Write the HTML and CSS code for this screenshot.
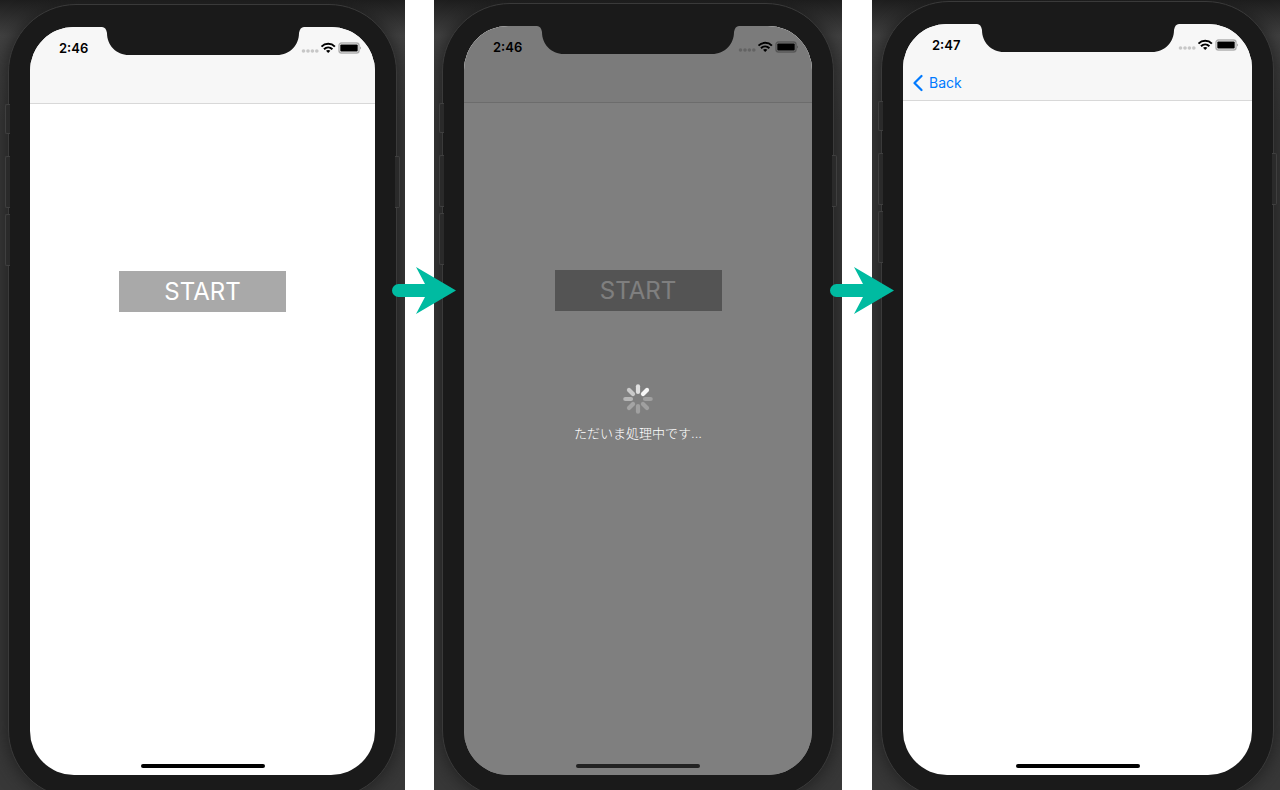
FILE: index.html
```html
<!DOCTYPE html>
<html lang="ja">
<head>
<meta charset="utf-8">
<meta name="viewport" content="width=device-width, initial-scale=1">
<title>START</title>
<link rel="stylesheet" href="styles.css">
</head>
<body>
<svg class="symbols" aria-hidden="true">
  <symbol id="notch" viewBox="0 0 202 28"><path d="M0 0Q4 0 5 6C5 18 14 28 27 28H175C188 28 197 18 197 6Q198 0 202 0Z"/></symbol>
  <symbol id="status" viewBox="0 0 60 12">
    <g fill="#8b8b8b" fill-opacity=".45"><circle cx="2.500" cy="9" r="1.800"/><circle cx="7" cy="9" r="1.800"/><circle cx="11.400" cy="9" r="1.800"/><circle cx="15.800" cy="9" r="1.800"/></g>
    <g fill="none" stroke="#000" stroke-width="2"><path d="M20.500 4.600C24.200.9 30.200.9 33.900 4.600"/><path d="M23 7.200C25.400 4.900 29 4.900 31.400 7.200"/></g>
    <path d="M25 8.700Q27.200 7.100 29.400 8.700L27.200 11Z"/>
    <rect x="38" y="1" width="20" height="10" rx="2.500" fill="#fff" fill-opacity=".15" stroke="#777" stroke-opacity=".55" stroke-width="1.400"/>
    <rect x="39.300" y="2.400" width="17.400" height="7.200" rx="1"/>
    <path d="M59 4.500Q60.800 6 59 7.500Z" fill="#777" fill-opacity=".7"/>
  </symbol>
  <symbol id="arrow" viewBox="0 0 64 48"><path fill="#00bba1" d="M24 1L64 24.500L24 48L33 31H6.500A6.500 6.500 0 0 1 6.500 18H33Z"/></symbol>
</svg>
<main class="scene">
  <section class="panel panel-first">
    <div class="phone">
      <i class="key key-mute"></i><i class="key key-up"></i><i class="key key-down"></i><i class="key key-power"></i>
      <div class="screen">
        <svg class="notch"><use href="#notch"/></svg>
        <header class="bar">
          <div class="status"><time>2:46</time><svg class="status-icons"><use href="#status"/></svg></div>
          <nav class="nav"></nav>
        </header>
        <div class="content"><button class="start" type="button">START</button></div>
        <div class="home"></div>
      </div>
    </div>
  </section>
  <div class="gap"><svg class="arrow"><use href="#arrow"/></svg></div>
  <section class="panel panel-second">
    <div class="phone">
      <i class="key key-mute"></i><i class="key key-up"></i><i class="key key-down"></i><i class="key key-power"></i>
      <div class="screen">
        <svg class="notch"><use href="#notch"/></svg>
        <header class="bar">
          <div class="status"><time>2:46</time><svg class="status-icons"><use href="#status"/></svg></div>
          <nav class="nav"></nav>
        </header>
        <div class="content"><button class="start" type="button">START</button></div>
        <div class="home home-dimmed"></div>
        <div class="overlay" role="status">
          <svg class="spinner" viewBox="-15 -15 30 30" fill="none" stroke-width="4.200" stroke-linecap="round">
            <path d="M0-7V-12.700" stroke="#e0e0e0"/>
            <path d="M5-5L9-9" stroke="#f8f8f8"/>
            <path d="M7 0H12.700" stroke="#a0a0a0"/>
            <path d="M5 5L9 9" stroke="#a0a0a0"/>
            <path d="M0 7V12.700" stroke="#a0a0a0"/>
            <path d="M-5 5L-9 9" stroke="#a4a4a4"/>
            <path d="M-7 0H-12.700" stroke="#b6b6b6"/>
            <path d="M-5-5L-9-9" stroke="#cacaca"/>
          </svg>
          <p class="message">ただいま処理中です...</p>
        </div>
      </div>
    </div>
  </section>
  <div class="gap"><svg class="arrow"><use href="#arrow"/></svg></div>
  <section class="panel panel-third">
    <div class="phone">
      <i class="key key-mute"></i><i class="key key-up"></i><i class="key key-down"></i><i class="key key-power"></i>
      <div class="screen">
        <svg class="notch"><use href="#notch"/></svg>
        <header class="bar">
          <div class="status"><time>2:47</time><svg class="status-icons"><use href="#status"/></svg></div>
          <nav class="nav"><a class="back" href="#"><svg class="chevron" viewBox="0 0 10 18" fill="none" stroke="currentColor" stroke-width="2.200" stroke-linecap="round" stroke-linejoin="round"><path d="M8.500 2L1.500 9L8.500 16"/></svg>Back</a></nav>
        </header>
        <div class="content"></div>
        <div class="home"></div>
      </div>
    </div>
  </section>
</main>
</body>
</html>
```

FILE: styles.css
```css
* { box-sizing: border-box; }

body {
  margin: 0;
  background: #fff;
  font-family: Inter, "Noto Sans CJK JP", sans-serif;
  color: #000;
}

.symbols { position: absolute; width: 0; height: 0; }

.scene {
  display: grid;
  grid-template-columns: 405fr 29px 408fr 30px 408fr;
  height: 100vh;
  overflow: hidden;
}

.panel {
  display: flex;
  overflow: hidden;
  background: linear-gradient(#1e1e1e, #424242 36px, #383838 120px, #383838);
}
.panel-first { padding: 4px 8px 0; }
.panel-second { padding: 3px 8px 0; }
.panel-third { padding: 1px 6px 0 9px; }

.phone {
  position: relative;
  flex: 1;
  display: flex;
  margin-bottom: -8px;
  padding: 22px 21px;
  border: 1px solid #3a3a3a;
  border-radius: 68px;
  background: #1a1a1a;
  box-shadow: 0 0 20px #1c1c1c;
}

.key {
  position: absolute;
  left: -4px;
  width: 5px;
  height: 52px;
  border: 1px solid #3f3f3f;
  border-right: 0;
  border-radius: 2px 0 0 2px;
  background: #2a2a2a;
}
.key-mute { top: 99px; height: 30px; }
.key-up { top: 151px; }
.key-down { top: 209px; }
.key-power {
  top: 151px;
  left: auto;
  right: -4px;
  border: 1px solid #3f3f3f;
  border-left: 0;
  border-radius: 0 2px 2px 0;
}

.screen {
  position: relative;
  flex: 1;
  display: flex;
  flex-direction: column;
  overflow: hidden;
  border-radius: 44px;
  background: #fff;
}

.notch {
  position: absolute;
  z-index: 3;
  top: 0;
  left: 50%;
  width: 202px;
  height: 28px;
  margin-left: -101px;
  fill: #1a1a1a;
}

.bar { background: #f7f7f7; border-bottom: 1px solid #d8d8d8; }

.status {
  display: flex;
  justify-content: space-between;
  align-items: center;
  height: 41px;
  padding: 0 14px 0 29px;
  font-size: 13px;
  font-weight: 600;
}
.status-icons { width: 60px; height: 12px; }

.nav { display: flex; align-items: center; height: 35px; padding: 0 10px; }
.back {
  display: flex;
  align-items: center;
  gap: 6px;
  color: #007aff;
  font-size: 14px;
  text-decoration: none;
}
.chevron { width: 10px; height: 18px; }

.content {
  flex: 1;
  display: flex;
  justify-content: center;
  align-items: flex-start;
  padding-top: 167px;
}

.start {
  width: 167px;
  height: 41px;
  padding: 0;
  border: 0;
  background: #a9a9a9;
  color: #fff;
  font: 24px Inter, sans-serif;
}

.home {
  align-self: center;
  width: 124px;
  height: 4px;
  margin-bottom: 7px;
  border-radius: 2px;
  background: #000;
}
.home-dimmed { position: relative; z-index: 2; background: #222; }

.overlay {
  position: absolute;
  inset: 0;
  display: flex;
  flex-direction: column;
  align-items: center;
  gap: 9px;
  padding-top: 358px;
  background: rgba(0, 0, 0, .5);
}
.spinner { width: 30px; height: 30px; }
.message {
  margin: 0;
  color: #fff;
  font: 300 13px/20px Inter, "Noto Sans CJK JP", sans-serif;
}

.gap { position: relative; z-index: 4; }
.arrow {
  position: absolute;
  top: 266px;
  right: -22px;
  width: 64px;
  height: 48px;
}
```
